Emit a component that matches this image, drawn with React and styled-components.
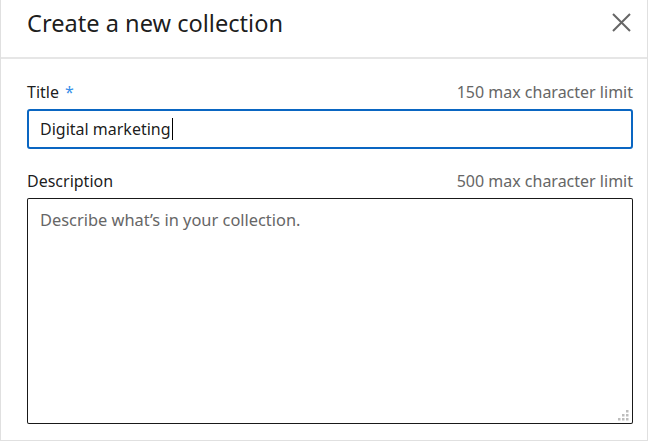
import React from "react";
import styled, { createGlobalStyle } from "styled-components";

const Global = createGlobalStyle`
  html, body { margin: 0; padding: 0; background: #fff; }
  body { font-family: "Noto Sans", "Open Sans", sans-serif; }
  * { box-sizing: border-box; }
`;

const Modal = styled.div`
  width: 648px;
  height: 441px;
  background: #fff;
  border: 1px solid #e0e0e0;
  border-top: none;
  display: flex;
  flex-direction: column;
`;

const Header = styled.header`
  height: 59px;
  flex: none;
  display: flex;
  align-items: center;
  justify-content: space-between;
  padding: 0 16px 12px 26px;
  border-bottom: 2px solid #e6e6e6;
`;

const Heading = styled.h2`
  margin: 0;
  font-family: "Noto Sans", "Open Sans", sans-serif;
  font-weight: 400;
  font-size: 23.6px;
  color: rgba(0, 0, 0, 0.9);
`;

const CloseButton = styled.button`
  width: 19px;
  height: 19px;
  padding: 0;
  border: none;
  background: none;
  display: flex;
  align-items: center;
  justify-content: center;
  color: #666;
  cursor: pointer;
`;

const Body = styled.div`
  flex: 1;
  display: flex;
  flex-direction: column;
  padding: 22px 14px 0 26px;
`;

const LabelRow = styled.div`
  display: flex;
  justify-content: space-between;
  align-items: baseline;
  height: 26px;
  margin-bottom: 2px;
  font-size: 16px;
  font-family: "Noto Sans", "Open Sans", sans-serif;
`;

const Label = styled.label`
  color: rgba(0, 0, 0, 0.9);
`;

const Required = styled.span`
  color: #378fe9;
  margin-left: 6px;
`;

const Limit = styled.span`
  color: #666;
`;

const TextField = styled.div`
  height: 40px;
  border: 2px solid #0a66c2;
  border-radius: 3px;
  display: flex;
  align-items: center;
  padding: 0 11px;
  font-family: "Noto Sans", "Open Sans", sans-serif;
  font-size: 16px;
  color: rgba(0, 0, 0, 0.9);
  margin-bottom: 21px;
`;

const Caret = styled.span`
  display: inline-block;
  width: 1px;
  height: 22px;
  background: #000;
  margin-left: 1px;
  margin-bottom: 1px;
`;

const AreaWrap = styled.div`
  position: relative;
  height: 226px;
`;

const TextArea = styled.textarea`
  width: 100%;
  height: 100%;
  display: block;
  resize: none;
  border: 1px solid rgba(0, 0, 0, 0.9);
  border-radius: 2px;
  padding: 10px 12px;
  font-family: "Noto Sans", "Open Sans", sans-serif;
  font-size: 16.4px;
  line-height: 22px;
  color: rgba(0, 0, 0, 0.9);
  outline: none;
  &::placeholder { color: #666; opacity: 1; }
`;

const Grip = styled.svg`
  position: absolute;
  right: 4px;
  bottom: 3px;
  pointer-events: none;
`;

export default function App() {
  return (
    <>
      <Global />
      <Modal>
        <Header>
          <Heading>Create a new collection</Heading>
          <CloseButton aria-label="Close">
            <svg width="19" height="19" viewBox="0 0 19 19">
              <path d="M1 1 L18 18 M18 1 L1 18" stroke="currentColor" strokeWidth="2" fill="none" />
            </svg>
          </CloseButton>
        </Header>
        <Body>
          <LabelRow>
            <Label>
              Title<Required>*</Required>
            </Label>
            <Limit>150 max character limit</Limit>
          </LabelRow>
          <TextField>
            Digital marketing
            <Caret />
          </TextField>
          <LabelRow>
            <Label>Description</Label>
            <Limit>500 max character limit</Limit>
          </LabelRow>
          <AreaWrap>
            <TextArea placeholder="Describe what’s in your collection." />
            <Grip width="12" height="12" viewBox="0 0 12 12">
              <g fill="#bdbdbd">
                <rect x="9" y="1" width="2.5" height="2.5" />
                <rect x="5" y="5" width="2.5" height="2.5" />
                <rect x="9" y="5" width="2.5" height="2.5" />
                <rect x="1" y="9" width="2.5" height="2.5" />
                <rect x="5" y="9" width="2.5" height="2.5" />
                <rect x="9" y="9" width="2.5" height="2.5" />
              </g>
            </Grip>
          </AreaWrap>
        </Body>
      </Modal>
    </>
  );
}
